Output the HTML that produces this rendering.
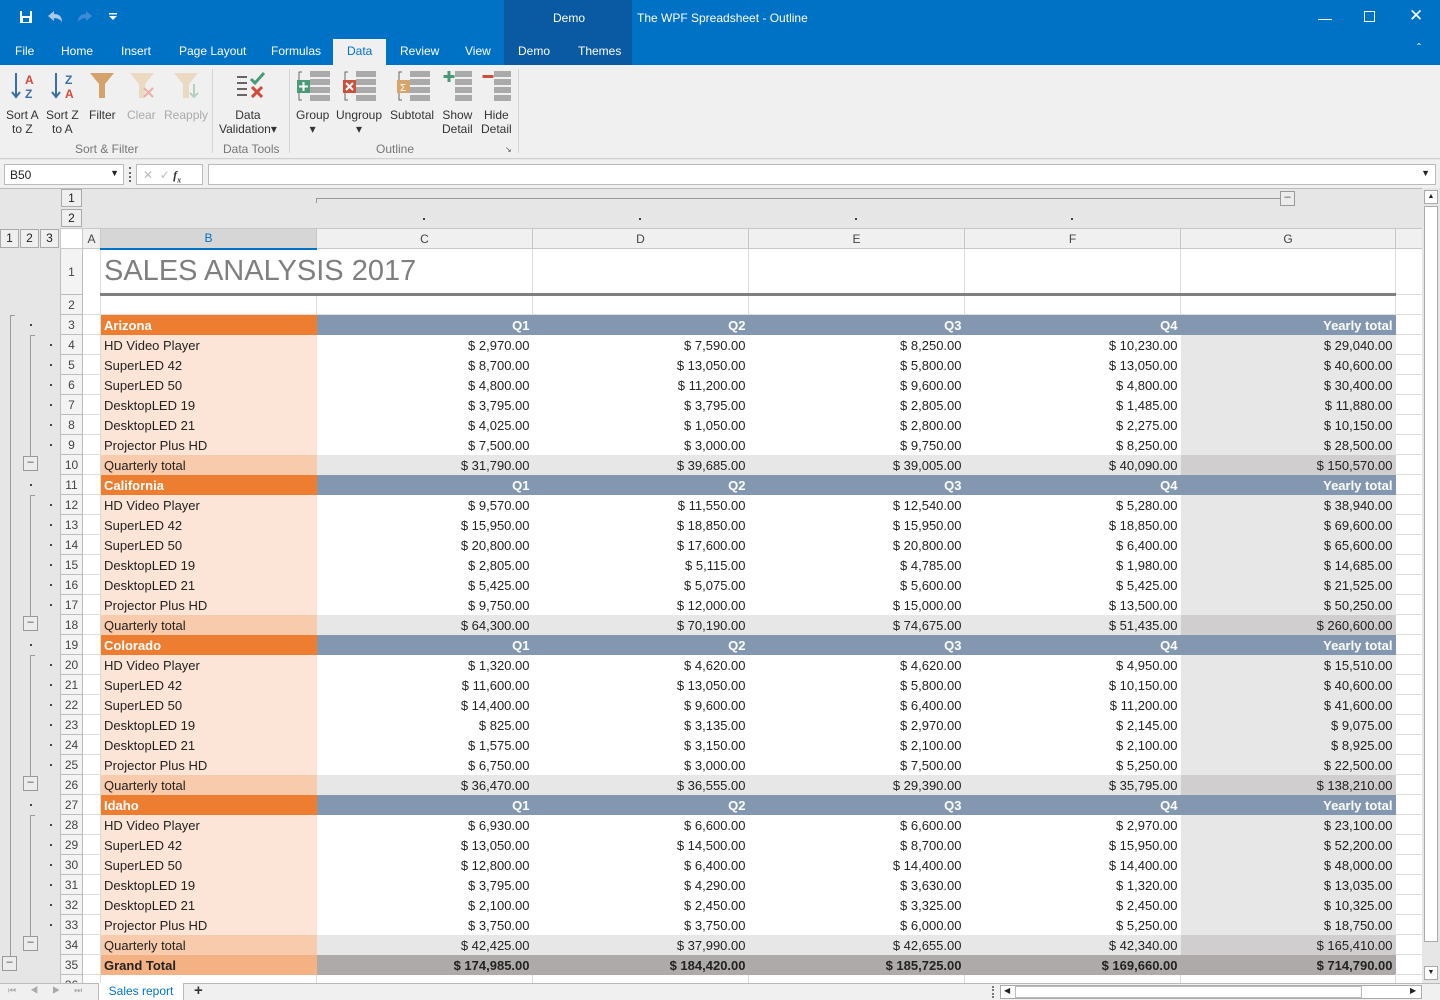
<!DOCTYPE html>
<html><head><meta charset="utf-8"><style>
*{box-sizing:border-box;margin:0;padding:0}
body{width:1440px;height:1000px;overflow:hidden;font-family:"Liberation Sans",sans-serif;font-size:12px;background:#e8e8e8;position:relative;color:#222}
.abs{position:absolute}
#title{left:0;top:0;width:1440px;height:34px;background:#0072c6;color:#fff}
#tabs{left:0;top:34px;width:1440px;height:31px;background:#0072c6;color:#fff}
.tab{position:absolute;top:10px;font-size:12px}
#ribbon{left:0;top:65px;width:1440px;height:94px;background:#f0f0f0;border-bottom:1px solid #d0d0d0}
.rb{position:absolute;text-align:center;font-size:12px;line-height:14px;color:#333}
.grp{position:absolute;top:77px;font-size:12px;color:#777}
.dis{color:#aaa}
#fbar{left:0;top:160px;width:1440px;height:28px;background:#f0f0f0}
table{border-collapse:collapse;table-layout:fixed;position:absolute;left:0;top:0;width:1362px}
td{height:20px;padding:0 3px;font-size:13px;white-space:nowrap;overflow:hidden;vertical-align:bottom;line-height:18px}
td.h{background:#f3f3f3;border:1px solid #bdbdbd;text-align:center;color:#444;font-size:12px;vertical-align:middle;padding:0}
.ch td{background:#f0f0f0;border:1px solid #c8c8c8;text-align:center;color:#444;font-size:12px;vertical-align:middle}
td.w{background:#fff;border-right:1px solid #dcdcdc;border-bottom:1px solid #dcdcdc}
td.a{background:#fff;border-right:1px solid #dcdcdc}
.hd td.b{background:#ed7d31;color:#fff;font-weight:bold}
.hd td.n{background:#8497b0;color:#fff;font-weight:bold;text-align:right}
td.bl{background:#fce4d6}
td.r{text-align:right;background:#fff}
td.g{text-align:right;background:#e7e7e7}
.qt td.bl{background:#f8cbad}
.qt td.r{background:#e7e7e7}
.qt td.g{background:#d0cece}
.gt td.bl{background:#f4b183;font-weight:bold}
.gt td.r,.gt td.g{background:#aeaaaa;font-weight:bold}
.mb{position:absolute;width:15px;height:15px;border:1px solid #999;background:#ececec;font-size:11px;line-height:11px;text-align:center;color:#444}
.dot{position:absolute;width:2px;height:2px;background:#444}
</style></head><body>
<div id="title" class="abs">
 <svg class="abs" style="left:19px;top:10px" width="14" height="14"><rect x="1" y="1" width="12" height="12" fill="#fff"/><rect x="3" y="1" width="8" height="5" fill="#0072c6"/><rect x="4" y="8" width="6" height="4" fill="#0072c6"/></svg>
 <svg class="abs" style="left:46px;top:10px" width="18" height="14"><path d="M2 6 L8 1 L8 4 Q16 4 16 12 Q13 8 8 8 L8 11 Z" fill="#a9c8ec"/></svg>
 <svg class="abs" style="left:76px;top:10px" width="18" height="14"><path d="M16 6 L10 1 L10 4 Q2 4 2 12 Q5 8 10 8 L10 11 Z" fill="#3d8ad6"/></svg>
 <svg class="abs" style="left:108px;top:12px" width="10" height="10"><rect x="1" y="1" width="8" height="1.5" fill="#fff"/><path d="M1 4 L9 4 L5 8Z" fill="#fff"/></svg>
 <div class="abs" style="left:504px;top:0;width:128px;height:65px;background:#0a5aa3"></div>
 <div class="abs" style="left:553px;top:11px;font-size:12px">Demo</div>
 <div class="abs" style="left:637px;top:11px;font-size:12px">The WPF Spreadsheet - Outline</div>
 <div class="abs" style="left:1318px;top:10px;font-size:14px">&#8212;</div>
 <div class="abs" style="left:1364px;top:11px;width:11px;height:11px;border:1px solid #fff"></div>
 <div class="abs" style="left:1409px;top:6px;font-size:17px">&#10005;</div>
</div>
<div id="tabs" class="abs">
 <div class="abs" style="left:504px;top:0;width:128px;height:31px;background:#0a5aa3"></div>
 <div class="abs" style="left:333px;top:5px;width:53px;height:26px;background:#f0f0f0"></div>
 <span class="tab" style="left:15px">File</span><span class="tab" style="left:61px">Home</span><span class="tab" style="left:121px">Insert</span><span class="tab" style="left:179px">Page Layout</span><span class="tab" style="left:271px">Formulas</span><span class="tab" style="left:347px;color:#0072c6">Data</span><span class="tab" style="left:400px">Review</span><span class="tab" style="left:465px">View</span><span class="tab" style="left:518px">Demo</span><span class="tab" style="left:578px">Themes</span>
 <span class="tab" style="left:1417px;top:7px">&#710;</span>
</div>
<div id="ribbon" class="abs">
 <svg class="abs" style="left:10px;top:5px" width="30" height="32"><path d="M6 3 V26 M2 22 L6 27 L10 22" stroke="#3a6ea5" stroke-width="2" fill="none"/><text x="15" y="14" font-size="12" font-weight="bold" fill="#d04a3a" font-family="Liberation Sans">A</text><text x="15" y="28" font-size="12" font-weight="bold" fill="#3a6ea5" font-family="Liberation Sans">Z</text></svg>
 <svg class="abs" style="left:50px;top:5px" width="30" height="32"><path d="M6 3 V26 M2 22 L6 27 L10 22" stroke="#3a6ea5" stroke-width="2" fill="none"/><text x="15" y="14" font-size="12" font-weight="bold" fill="#3a6ea5" font-family="Liberation Sans">Z</text><text x="15" y="28" font-size="12" font-weight="bold" fill="#d04a3a" font-family="Liberation Sans">A</text></svg>
 <svg class="abs" style="left:89px;top:5px" width="26" height="32"><path d="M1 3 H25 L16 14 V28 H10 V14Z" fill="#d3a36b"/></svg>
 <svg class="abs" style="left:129px;top:5px" width="26" height="32"><path d="M1 3 H25 L16 14 V28 H10 V14Z" fill="#ecd9c2"/><path d="M15 18 L24 27 M24 18 L15 27" stroke="#e7b1a8" stroke-width="2"/></svg>
 <svg class="abs" style="left:173px;top:5px" width="26" height="32"><path d="M1 3 H25 L16 14 V28 H10 V14Z" fill="#ecd9c2"/><path d="M21 14 V27 M17 23 L21 27 L25 23" stroke="#b6d0c0" stroke-width="2" fill="none"/></svg>
 <div class="rb" style="left:6px;top:43px">Sort A<br>to Z</div>
 <div class="rb" style="left:46px;top:43px">Sort Z<br>to A</div>
 <div class="rb" style="left:89px;top:43px">Filter</div>
 <div class="rb dis" style="left:127px;top:43px">Clear</div>
 <div class="rb dis" style="left:164px;top:43px">Reapply</div>
 <div class="grp" style="left:75px">Sort &amp; Filter</div>
 <div class="abs" style="left:212px;top:4px;width:1px;height:84px;background:#d6d6d6"></div>
 <svg class="abs" style="left:236px;top:6px" width="32" height="30"><path d="M1 6 H11 M1 12 H11 M1 18 H11 M1 24 H11" stroke="#666" stroke-width="2"/><path d="M15 8 L19 12 L28 2" stroke="#4a9a78" stroke-width="3" fill="none"/><path d="M16 16 L26 26 M26 16 L16 26" stroke="#d04a3a" stroke-width="3"/></svg>
 <div class="rb" style="left:219px;top:43px">Data<br>Validation&#9662;</div>
 <div class="grp" style="left:223px">Data Tools</div>
 <div class="abs" style="left:289px;top:4px;width:1px;height:84px;background:#d6d6d6"></div>
 <svg class="abs" style="left:296px;top:5px" width="36" height="32"><path d="M6 2 H3 V30 H6" stroke="#666" fill="none"/><rect x="14" y="1" width="20" height="6" fill="#aaa"/><rect x="14" y="9" width="20" height="6" fill="#aaa"/><rect x="14" y="17" width="20" height="6" fill="#aaa"/><rect x="14" y="25" width="20" height="6" fill="#aaa"/><rect x="1" y="10" width="13" height="13" fill="#4a9a78"/><path d="M7.5 12 V21 M3 16.5 H12" stroke="#fff" stroke-width="2"/></svg>
 <div class="rb" style="left:296px;top:43px">Group<br>&#9662;</div>
 <svg class="abs" style="left:342px;top:5px" width="36" height="32"><path d="M6 2 H3 V30 H6" stroke="#666" fill="none"/><rect x="14" y="1" width="20" height="6" fill="#aaa"/><rect x="14" y="9" width="20" height="6" fill="#aaa"/><rect x="14" y="17" width="20" height="6" fill="#aaa"/><rect x="14" y="25" width="20" height="6" fill="#aaa"/><rect x="1" y="10" width="13" height="13" fill="#c8503c"/><path d="M4 13 L11 20 M11 13 L4 20" stroke="#fff" stroke-width="2"/></svg>
 <div class="rb" style="left:336px;top:43px">Ungroup<br>&#9662;</div>
 <svg class="abs" style="left:396px;top:5px" width="36" height="32"><path d="M6 2 H3 V30 H6" stroke="#666" fill="none"/><rect x="14" y="1" width="20" height="6" fill="#aaa"/><rect x="14" y="9" width="20" height="6" fill="#aaa"/><rect x="14" y="17" width="20" height="6" fill="#aaa"/><rect x="14" y="25" width="20" height="6" fill="#aaa"/><rect x="1" y="10" width="13" height="13" fill="#d7a56b"/><text x="4" y="21" font-size="10" fill="#fff">&#931;</text></svg>
 <div class="rb" style="left:390px;top:43px">Subtotal</div>
 <svg class="abs" style="left:443px;top:5px" width="30" height="32"><path d="M6 1 V12 M0.5 6.5 H11.5" stroke="#4a9a78" stroke-width="3"/><rect x="12" y="1" width="17" height="6" fill="#aaa"/><rect x="12" y="9" width="17" height="6" fill="#aaa"/><rect x="12" y="17" width="17" height="6" fill="#aaa"/><rect x="12" y="25" width="17" height="6" fill="#aaa"/></svg>
 <div class="rb" style="left:442px;top:43px">Show<br>Detail</div>
 <svg class="abs" style="left:482px;top:5px" width="30" height="32"><path d="M0.5 6.5 H11.5" stroke="#c8503c" stroke-width="3"/><rect x="12" y="1" width="17" height="6" fill="#aaa"/><rect x="12" y="9" width="17" height="6" fill="#aaa"/><rect x="12" y="17" width="17" height="6" fill="#aaa"/><rect x="12" y="25" width="17" height="6" fill="#aaa"/></svg>
 <div class="rb" style="left:481px;top:43px">Hide<br>Detail</div>
 <div class="grp" style="left:376px">Outline</div>
 <div class="abs" style="left:505px;top:80px;font-size:8px;color:#555">&#8600;</div>
 <div class="abs" style="left:518px;top:4px;width:1px;height:84px;background:#d6d6d6"></div>
</div>
<div id="fbar" class="abs">
 <div class="abs" style="left:4px;top:4px;width:120px;height:21px;background:#fff;border:1px solid #bbb;padding:3px 5px;font-size:12px">B50<span style="position:absolute;right:4px;top:3px;font-size:9px">&#9660;</span></div>
 <div class="abs" style="left:129px;top:7px;width:1px;height:15px;border-left:2px dotted #666"></div>
 <div class="abs" style="left:136px;top:4px;width:67px;height:21px;background:#fff;border:1px solid #bbb;font-size:12px;padding:3px 6px;color:#bbb">&#10005; &nbsp;&#10003; <i style="color:#333;font-family:'Liberation Serif';font-weight:bold">f<sub style="font-size:8px">x</sub></i></div>
 <div class="abs" style="left:208px;top:4px;width:1228px;height:21px;background:#fff;border:1px solid #bbb"><span style="position:absolute;right:5px;top:3px;font-size:9px">&#9660;</span></div>
</div>
<div class="abs" style="left:0;top:188px;width:1422px;height:795px;background:#e6e6e6;border-top:1px solid #bbb"></div>
<div class="abs" style="left:61px;top:189px;width:21px;height:18px;border:1px solid #aaa;background:#efefef;text-align:center;font-size:12px;line-height:16px">1</div>
<div class="abs" style="left:61px;top:209px;width:21px;height:18px;border:1px solid #aaa;background:#efefef;text-align:center;font-size:12px;line-height:16px">2</div>
<div class="abs" style="left:0;top:229px;width:19px;height:19px;border:1px solid #aaa;background:#efefef;text-align:center;font-size:12px;line-height:17px">1</div>
<div class="abs" style="left:20px;top:229px;width:19px;height:19px;border:1px solid #aaa;background:#efefef;text-align:center;font-size:12px;line-height:17px">2</div>
<div class="abs" style="left:40px;top:229px;width:19px;height:19px;border:1px solid #aaa;background:#efefef;text-align:center;font-size:12px;line-height:17px">3</div>
<div class="abs" style="left:316px;top:198px;width:972px;height:5px;border-top:1px solid #999;border-left:1px solid #999"></div>
<div class="mb" style="left:1280px;top:191px">&#8211;</div>
<div class="dot" style="left:423px;top:218px"></div><div class="dot" style="left:639px;top:218px"></div><div class="dot" style="left:855px;top:218px"></div><div class="dot" style="left:1071px;top:218px"></div>
<div class="abs" style="left:10px;top:315px;width:5px;height:648px;border-top:1px solid #999;border-left:1px solid #999"></div>
<div class="mb" style="left:2px;top:956px">&#8211;</div>
<div class="abs" style="left:30px;top:335px;width:5px;height:121px;border-top:1px solid #999;border-left:1px solid #999"></div>
<div class="abs" style="left:30px;top:495px;width:5px;height:121px;border-top:1px solid #999;border-left:1px solid #999"></div>
<div class="abs" style="left:30px;top:655px;width:5px;height:121px;border-top:1px solid #999;border-left:1px solid #999"></div>
<div class="abs" style="left:30px;top:815px;width:5px;height:121px;border-top:1px solid #999;border-left:1px solid #999"></div>
<div class="mb" style="left:23px;top:456px">&#8211;</div><div class="mb" style="left:23px;top:616px">&#8211;</div><div class="mb" style="left:23px;top:776px">&#8211;</div><div class="mb" style="left:23px;top:936px">&#8211;</div>
<div class="dot" style="left:30px;top:324px"></div><div class="dot" style="left:30px;top:484px"></div><div class="dot" style="left:30px;top:644px"></div><div class="dot" style="left:30px;top:804px"></div>
<div class="dot" style="left:50px;top:344px"></div><div class="dot" style="left:50px;top:364px"></div><div class="dot" style="left:50px;top:384px"></div><div class="dot" style="left:50px;top:404px"></div><div class="dot" style="left:50px;top:424px"></div><div class="dot" style="left:50px;top:444px"></div>
<div class="dot" style="left:50px;top:504px"></div><div class="dot" style="left:50px;top:524px"></div><div class="dot" style="left:50px;top:544px"></div><div class="dot" style="left:50px;top:564px"></div><div class="dot" style="left:50px;top:584px"></div><div class="dot" style="left:50px;top:604px"></div>
<div class="dot" style="left:50px;top:664px"></div><div class="dot" style="left:50px;top:684px"></div><div class="dot" style="left:50px;top:704px"></div><div class="dot" style="left:50px;top:724px"></div><div class="dot" style="left:50px;top:744px"></div><div class="dot" style="left:50px;top:764px"></div>
<div class="dot" style="left:50px;top:824px"></div><div class="dot" style="left:50px;top:844px"></div><div class="dot" style="left:50px;top:864px"></div><div class="dot" style="left:50px;top:884px"></div><div class="dot" style="left:50px;top:904px"></div><div class="dot" style="left:50px;top:924px"></div>
<div class="abs" style="left:60px;top:228px;width:1362px;height:755px;overflow:hidden">
<table>
<colgroup><col style="width:22px"><col style="width:18px"><col style="width:216px"><col style="width:216px"><col style="width:216px"><col style="width:216px"><col style="width:216px"><col style="width:215px"><col style="width:27px"></colgroup>
<tr class="ch"><td style="background:#fff"></td><td>A</td><td style="background:#d6d6d6;color:#0072c6;border-bottom:2px solid #0072c6">B</td><td>C</td><td>D</td><td>E</td><td>F</td><td>G</td><td></td></tr>
<tr><td class="h" style="height:46px">1</td><td class="a"></td><td style="background:#fff;font-size:29px;color:#7f7f7f;line-height:32px;padding-left:3px;overflow:visible;vertical-align:middle;border-bottom:3px solid #7f7f7f;height:46px">SALES ANALYSIS 2017</td><td class="a" style="border-bottom:3px solid #7f7f7f"></td><td class="a" style="border-bottom:3px solid #7f7f7f"></td><td class="a" style="border-bottom:3px solid #7f7f7f"></td><td class="a" style="border-bottom:3px solid #7f7f7f"></td><td class="a" style="border-bottom:3px solid #7f7f7f"></td><td class="w"></td></tr>
<tr><td class="h" style="height:19px">2</td><td class="w" style="height:19px"></td><td class="w"></td><td class="w"></td><td class="w"></td><td class="w"></td><td class="w"></td><td class="w"></td><td class="w"></td></tr>
<tr class="hd"><td class="h">3</td><td class="w"></td><td class="b">Arizona</td><td class="n">Q1</td><td class="n">Q2</td><td class="n">Q3</td><td class="n">Q4</td><td class="n">Yearly total</td><td class="w"></td></tr>
<tr><td class="h">4</td><td class="w"></td><td class="bl">HD Video Player</td><td class="r">$ 2,970.00</td><td class="r">$ 7,590.00</td><td class="r">$ 8,250.00</td><td class="r">$ 10,230.00</td><td class="g">$ 29,040.00</td><td class="w"></td></tr>
<tr><td class="h">5</td><td class="w"></td><td class="bl">SuperLED 42</td><td class="r">$ 8,700.00</td><td class="r">$ 13,050.00</td><td class="r">$ 5,800.00</td><td class="r">$ 13,050.00</td><td class="g">$ 40,600.00</td><td class="w"></td></tr>
<tr><td class="h">6</td><td class="w"></td><td class="bl">SuperLED 50</td><td class="r">$ 4,800.00</td><td class="r">$ 11,200.00</td><td class="r">$ 9,600.00</td><td class="r">$ 4,800.00</td><td class="g">$ 30,400.00</td><td class="w"></td></tr>
<tr><td class="h">7</td><td class="w"></td><td class="bl">DesktopLED 19</td><td class="r">$ 3,795.00</td><td class="r">$ 3,795.00</td><td class="r">$ 2,805.00</td><td class="r">$ 1,485.00</td><td class="g">$ 11,880.00</td><td class="w"></td></tr>
<tr><td class="h">8</td><td class="w"></td><td class="bl">DesktopLED 21</td><td class="r">$ 4,025.00</td><td class="r">$ 1,050.00</td><td class="r">$ 2,800.00</td><td class="r">$ 2,275.00</td><td class="g">$ 10,150.00</td><td class="w"></td></tr>
<tr><td class="h">9</td><td class="w"></td><td class="bl">Projector Plus HD</td><td class="r">$ 7,500.00</td><td class="r">$ 3,000.00</td><td class="r">$ 9,750.00</td><td class="r">$ 8,250.00</td><td class="g">$ 28,500.00</td><td class="w"></td></tr>
<tr class="qt"><td class="h">10</td><td class="w"></td><td class="bl">Quarterly total</td><td class="r">$ 31,790.00</td><td class="r">$ 39,685.00</td><td class="r">$ 39,005.00</td><td class="r">$ 40,090.00</td><td class="g">$ 150,570.00</td><td class="w"></td></tr>
<tr class="hd"><td class="h">11</td><td class="w"></td><td class="b">California</td><td class="n">Q1</td><td class="n">Q2</td><td class="n">Q3</td><td class="n">Q4</td><td class="n">Yearly total</td><td class="w"></td></tr>
<tr><td class="h">12</td><td class="w"></td><td class="bl">HD Video Player</td><td class="r">$ 9,570.00</td><td class="r">$ 11,550.00</td><td class="r">$ 12,540.00</td><td class="r">$ 5,280.00</td><td class="g">$ 38,940.00</td><td class="w"></td></tr>
<tr><td class="h">13</td><td class="w"></td><td class="bl">SuperLED 42</td><td class="r">$ 15,950.00</td><td class="r">$ 18,850.00</td><td class="r">$ 15,950.00</td><td class="r">$ 18,850.00</td><td class="g">$ 69,600.00</td><td class="w"></td></tr>
<tr><td class="h">14</td><td class="w"></td><td class="bl">SuperLED 50</td><td class="r">$ 20,800.00</td><td class="r">$ 17,600.00</td><td class="r">$ 20,800.00</td><td class="r">$ 6,400.00</td><td class="g">$ 65,600.00</td><td class="w"></td></tr>
<tr><td class="h">15</td><td class="w"></td><td class="bl">DesktopLED 19</td><td class="r">$ 2,805.00</td><td class="r">$ 5,115.00</td><td class="r">$ 4,785.00</td><td class="r">$ 1,980.00</td><td class="g">$ 14,685.00</td><td class="w"></td></tr>
<tr><td class="h">16</td><td class="w"></td><td class="bl">DesktopLED 21</td><td class="r">$ 5,425.00</td><td class="r">$ 5,075.00</td><td class="r">$ 5,600.00</td><td class="r">$ 5,425.00</td><td class="g">$ 21,525.00</td><td class="w"></td></tr>
<tr><td class="h">17</td><td class="w"></td><td class="bl">Projector Plus HD</td><td class="r">$ 9,750.00</td><td class="r">$ 12,000.00</td><td class="r">$ 15,000.00</td><td class="r">$ 13,500.00</td><td class="g">$ 50,250.00</td><td class="w"></td></tr>
<tr class="qt"><td class="h">18</td><td class="w"></td><td class="bl">Quarterly total</td><td class="r">$ 64,300.00</td><td class="r">$ 70,190.00</td><td class="r">$ 74,675.00</td><td class="r">$ 51,435.00</td><td class="g">$ 260,600.00</td><td class="w"></td></tr>
<tr class="hd"><td class="h">19</td><td class="w"></td><td class="b">Colorado</td><td class="n">Q1</td><td class="n">Q2</td><td class="n">Q3</td><td class="n">Q4</td><td class="n">Yearly total</td><td class="w"></td></tr>
<tr><td class="h">20</td><td class="w"></td><td class="bl">HD Video Player</td><td class="r">$ 1,320.00</td><td class="r">$ 4,620.00</td><td class="r">$ 4,620.00</td><td class="r">$ 4,950.00</td><td class="g">$ 15,510.00</td><td class="w"></td></tr>
<tr><td class="h">21</td><td class="w"></td><td class="bl">SuperLED 42</td><td class="r">$ 11,600.00</td><td class="r">$ 13,050.00</td><td class="r">$ 5,800.00</td><td class="r">$ 10,150.00</td><td class="g">$ 40,600.00</td><td class="w"></td></tr>
<tr><td class="h">22</td><td class="w"></td><td class="bl">SuperLED 50</td><td class="r">$ 14,400.00</td><td class="r">$ 9,600.00</td><td class="r">$ 6,400.00</td><td class="r">$ 11,200.00</td><td class="g">$ 41,600.00</td><td class="w"></td></tr>
<tr><td class="h">23</td><td class="w"></td><td class="bl">DesktopLED 19</td><td class="r">$ 825.00</td><td class="r">$ 3,135.00</td><td class="r">$ 2,970.00</td><td class="r">$ 2,145.00</td><td class="g">$ 9,075.00</td><td class="w"></td></tr>
<tr><td class="h">24</td><td class="w"></td><td class="bl">DesktopLED 21</td><td class="r">$ 1,575.00</td><td class="r">$ 3,150.00</td><td class="r">$ 2,100.00</td><td class="r">$ 2,100.00</td><td class="g">$ 8,925.00</td><td class="w"></td></tr>
<tr><td class="h">25</td><td class="w"></td><td class="bl">Projector Plus HD</td><td class="r">$ 6,750.00</td><td class="r">$ 3,000.00</td><td class="r">$ 7,500.00</td><td class="r">$ 5,250.00</td><td class="g">$ 22,500.00</td><td class="w"></td></tr>
<tr class="qt"><td class="h">26</td><td class="w"></td><td class="bl">Quarterly total</td><td class="r">$ 36,470.00</td><td class="r">$ 36,555.00</td><td class="r">$ 29,390.00</td><td class="r">$ 35,795.00</td><td class="g">$ 138,210.00</td><td class="w"></td></tr>
<tr class="hd"><td class="h">27</td><td class="w"></td><td class="b">Idaho</td><td class="n">Q1</td><td class="n">Q2</td><td class="n">Q3</td><td class="n">Q4</td><td class="n">Yearly total</td><td class="w"></td></tr>
<tr><td class="h">28</td><td class="w"></td><td class="bl">HD Video Player</td><td class="r">$ 6,930.00</td><td class="r">$ 6,600.00</td><td class="r">$ 6,600.00</td><td class="r">$ 2,970.00</td><td class="g">$ 23,100.00</td><td class="w"></td></tr>
<tr><td class="h">29</td><td class="w"></td><td class="bl">SuperLED 42</td><td class="r">$ 13,050.00</td><td class="r">$ 14,500.00</td><td class="r">$ 8,700.00</td><td class="r">$ 15,950.00</td><td class="g">$ 52,200.00</td><td class="w"></td></tr>
<tr><td class="h">30</td><td class="w"></td><td class="bl">SuperLED 50</td><td class="r">$ 12,800.00</td><td class="r">$ 6,400.00</td><td class="r">$ 14,400.00</td><td class="r">$ 14,400.00</td><td class="g">$ 48,000.00</td><td class="w"></td></tr>
<tr><td class="h">31</td><td class="w"></td><td class="bl">DesktopLED 19</td><td class="r">$ 3,795.00</td><td class="r">$ 4,290.00</td><td class="r">$ 3,630.00</td><td class="r">$ 1,320.00</td><td class="g">$ 13,035.00</td><td class="w"></td></tr>
<tr><td class="h">32</td><td class="w"></td><td class="bl">DesktopLED 21</td><td class="r">$ 2,100.00</td><td class="r">$ 2,450.00</td><td class="r">$ 3,325.00</td><td class="r">$ 2,450.00</td><td class="g">$ 10,325.00</td><td class="w"></td></tr>
<tr><td class="h">33</td><td class="w"></td><td class="bl">Projector Plus HD</td><td class="r">$ 3,750.00</td><td class="r">$ 3,750.00</td><td class="r">$ 6,000.00</td><td class="r">$ 5,250.00</td><td class="g">$ 18,750.00</td><td class="w"></td></tr>
<tr class="qt"><td class="h">34</td><td class="w"></td><td class="bl">Quarterly total</td><td class="r">$ 42,425.00</td><td class="r">$ 37,990.00</td><td class="r">$ 42,655.00</td><td class="r">$ 42,340.00</td><td class="g">$ 165,410.00</td><td class="w"></td></tr>
<tr class="gt"><td class="h">35</td><td class="w"></td><td class="bl">Grand Total</td><td class="r">$ 174,985.00</td><td class="r">$ 184,420.00</td><td class="r">$ 185,725.00</td><td class="r">$ 169,660.00</td><td class="g">$ 714,790.00</td><td class="w"></td></tr>
<tr><td class="h">36</td><td class="w"></td><td class="w"></td><td class="w"></td><td class="w"></td><td class="w"></td><td class="w"></td><td class="w"></td><td class="w"></td></tr>
</table></div>
<div class="abs" style="left:1422px;top:188px;width:18px;height:795px;background:#e6e6e6"></div>
<div class="abs" style="left:1424px;top:190px;width:14px;height:14px;border:1px solid #aaa;background:#fff;font-size:7px;text-align:center;line-height:12px">&#9650;</div>
<div class="abs" style="left:1424px;top:206px;width:14px;height:736px;border:1px solid #aaa;background:#fff"></div>
<div class="abs" style="left:1424px;top:966px;width:14px;height:14px;border:1px solid #aaa;background:#fff;font-size:7px;text-align:center;line-height:12px">&#9660;</div>
<div class="abs" style="left:0;top:983px;width:1440px;height:17px;background:#f0f0f0;border-top:1px solid #bbb"></div>
<div class="abs" style="left:8px;top:985px;font-size:9px;color:#aaa;letter-spacing:14px">&#9198;&#9664;&#9654;&#9197;</div>
<div class="abs" style="left:98px;top:983px;width:86px;height:17px;background:#fff;border-left:1px solid #bbb;border-right:1px solid #bbb;color:#0072c6;font-size:12px;text-align:center;line-height:16px">Sales report</div>
<div class="abs" style="left:194px;top:982px;font-size:15px;font-weight:bold;color:#333">+</div>
<div class="abs" style="left:992px;top:986px;height:12px;border-left:2px dotted #777"></div>
<div class="abs" style="left:1000px;top:985px;width:422px;height:14px;border:1px solid #aaa;background:#fff"></div>
<div class="abs" style="left:1015px;top:986px;width:347px;height:12px;border:1px solid #bbb;background:#fff"></div>
<div class="abs" style="left:1004px;top:986px;font-size:8px">&#9664;</div>
<div class="abs" style="left:1410px;top:986px;font-size:8px">&#9654;</div>
</body></html>
